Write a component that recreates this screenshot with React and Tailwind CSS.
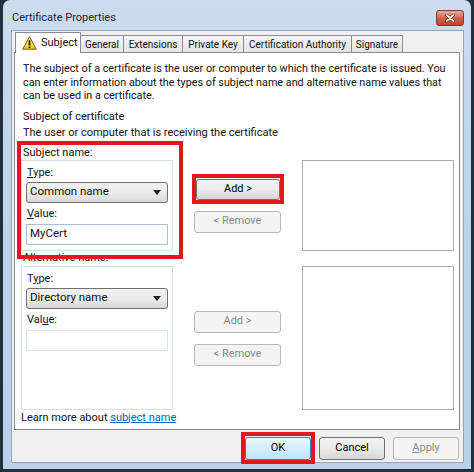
import React from 'react'

const font = { fontFamily: 'Roboto, "Noto Sans", sans-serif' }

function Warn() {
  return (
    <svg width="15" height="14" viewBox="0 0 15 14">
      <defs>
        <linearGradient id="wg" x1="0" y1="0" x2="0" y2="1">
          <stop offset="0" stopColor="#fff6a8" />
          <stop offset="1" stopColor="#e8c21c" />
        </linearGradient>
      </defs>
      <path d="M7.5 0.8 L14.3 13.2 L0.7 13.2 Z" fill="url(#wg)" stroke="#7a5a00" strokeWidth="1" strokeLinejoin="round" />
      <rect x="6.7" y="4.2" width="1.6" height="5.2" fill="#111" />
      <rect x="6.7" y="10.4" width="1.6" height="1.6" fill="#111" />
    </svg>
  )
}

function Btn({ children, disabled, primary, className = '' }) {
  const tone = disabled
    ? 'border-[#b5b9bd] bg-[#f4f4f4] text-[#8a8a8a]'
    : primary
      ? 'border-[#3c7fb1] bg-gradient-to-b from-[#eaf6fd] to-[#bee6fd] text-black'
      : 'border-[#707070] bg-gradient-to-b from-[#f2f2f2] via-[#ebebeb] to-[#d5d5d5] text-black'
  return (
    <div className={`flex items-center justify-center rounded-[3px] border ${tone} ${className}`}>
      {children}
    </div>
  )
}

function Combo({ label }) {
  return (
    <div className="flex h-[21px] items-center justify-between rounded-[3px] border border-[#707070] bg-gradient-to-b from-[#f2f2f2] via-[#ebebeb] to-[#d8d8d8] pl-[3px] pr-[6px] text-[11.5px]">
      <span>{label}</span>
      <svg width="8" height="5" viewBox="0 0 8 5"><path d="M0 0 H8 L4 5 Z" fill="#222" /></svg>
    </div>
  )
}

function Group({ typeLabel, valueLabel, combo, value, light, className = '' }) {
  return (
    <div className={`flex flex-col border border-[#d5dfe5] px-[4px] ${className}`}>
      <div className="mt-[5px] h-[14px] pl-[1px] leading-[14px]">{typeLabel}</div>
      <div className="mt-[2px]"><Combo label={combo} /></div>
      <div className="mt-[4px] h-[14px] pl-[1px] leading-[14px]">{valueLabel}</div>
      <div className={`mt-[3px] flex h-[21px] items-center border bg-white pl-[3px] text-[11.5px] ${light ? 'border-[#dde2e7]' : 'border-[#a9bfd6]'}`}>
        {value}
      </div>
    </div>
  )
}

export default function App() {
  const tabs = [
    { label: 'General', w: 'w-[43px]' },
    { label: 'Extensions', w: 'w-[59px]' },
    { label: 'Private Key', w: 'w-[61px]' },
    { label: 'Certification Authority', w: 'w-[108px]' },
    { label: 'Signature', w: 'w-[51px]' },
  ]

  return (
    <div className="h-[472px] w-[474px] overflow-hidden bg-[#22303c] pb-[3px] pl-[3px] pr-[3px] text-[11px] text-[#111]" style={font}>
      <div className="flex h-full flex-col rounded-t-[7px] bg-gradient-to-b from-[#cbdcee] via-[#bdd3ea] to-[#b9d1ea] pb-[6px] pl-[8px] pr-[7px]">
        {/* Title bar */}
        <div className="flex h-[30px] shrink-0 items-start justify-between">
          <div className="mt-[11px] pl-[1px] text-[11px] leading-[14px] text-[#17283a]">Certificate Properties</div>
          <div className="mt-[10px] flex h-[16px] w-[28px] items-center justify-center rounded-[3px] border border-[#7d3a30] bg-gradient-to-b from-[#e9a99b] via-[#d2634e] to-[#c0402a]">
            <svg width="10" height="8" viewBox="0 0 10 8">
              <path d="M1.5 1 L8.5 7 M8.5 1 L1.5 7" stroke="#5a1a10" strokeWidth="3" strokeLinecap="round" />
              <path d="M1.5 1 L8.5 7 M8.5 1 L1.5 7" stroke="#fff" strokeWidth="1.7" strokeLinecap="round" />
            </svg>
          </div>
        </div>

        {/* Client area */}
        <div className="flex flex-1 flex-col border border-[#8fa5bd] bg-[#f0f0f0]">
          {/* Tabs */}
          <div className="ml-[3px] flex h-[21px] items-end text-[10px]">
            <div className="relative z-10 -mb-px flex h-[21px] w-[66px] items-center gap-[4px] border border-b-0 border-[#898c95] bg-white pl-[6px] text-[11px]">
              <Warn />
              <span>Subject</span>
            </div>
            {tabs.map(t => (
              <div key={t.label} className={`flex h-[17px] items-center justify-center border border-b-0 border-l-0 border-[#898c95] bg-gradient-to-b from-[#f6f6f6] to-[#e4e4e4] ${t.w}`}>
                {t.label}
              </div>
            ))}
          </div>

          {/* Panel */}
          <div className="ml-[2px] flex h-[378px] w-[446px] flex-col border border-[#898c95] bg-white pl-[6px] pr-[5px]">
            <p className="mt-[9px] whitespace-nowrap pl-[2px] text-[10.8px] leading-[13.5px]">
              The subject of a certificate is the user or computer to which the certificate is issued. You<br />
              can enter information about the types of subject name and alternative name values that<br />
              can be used in a certificate.
            </p>
            <div className="mt-[7px] pl-[2px] leading-[14px]">Subject of certificate</div>
            <div className="mt-[2px] pl-[2px] leading-[14px]">The user or computer that is receiving the certificate</div>

            {/* Row 1 */}
            <div className="mt-[6px] grid grid-cols-[152px_87px_152px] gap-x-[21px]">
              <div className="relative flex flex-col">
                <div className="h-[14px] pl-[2px] leading-[14px]">Subject name:</div>
                <Group
                  className="h-[91px]"
                  typeLabel={<><span className="underline">T</span>ype:</>}
                  valueLabel={<><span className="underline">V</span>alue:</>}
                  combo="Common name"
                  value="MyCert"
                />
                <div className="absolute -left-[4px] -top-[5px] bottom-[-8px] right-[-10px] z-20 border-[4px] border-[#e3151f]" />
              </div>
              <div className="flex flex-col pt-[33px]">
                <div className="relative ml-[2px] w-[84px]">
                  <Btn className="h-[21px]">Add &gt;</Btn>
                  <div className="absolute -bottom-[4px] -left-[4px] -right-[4px] -top-[5px] border-[4px] border-[#e3151f]" />
                </div>
                <Btn disabled className="mt-[11px] h-[22px]">&lt; Remove</Btn>
              </div>
              <div className="mt-[14px] h-[91px] border border-[#a9adb3] bg-white" />
            </div>

            {/* Row 2 */}
            <div className="h-[14px] pl-[2px] leading-[14px]">Alternative name:</div>
            <div className="mt-[1px] grid grid-cols-[152px_87px_152px] gap-x-[21px]">
              <Group
                className="h-[144px]"
                typeLabel={<>T<span className="underline">y</span>pe:</>}
                valueLabel={<>Val<span className="underline">u</span>e:</>}
                combo="Directory name"
                value=""
                light
              />
              <div className="flex flex-col pt-[45px]">
                <Btn disabled className="h-[22px]">Add &gt;</Btn>
                <Btn disabled className="mt-[11px] h-[22px]">&lt; Remove</Btn>
              </div>
              <div className="h-[144px] border border-[#a9adb3] bg-white" />
            </div>

            <div className="mt-[1px] h-[14px] leading-[14px]">
              Learn more about <span className="text-[#0066cc] underline">subject name</span>
            </div>
          </div>

          {/* Dialog buttons */}
          <div className="mt-[7px] flex justify-end gap-[8px] pr-[4px]">
            <div className="relative">
              <Btn primary className="h-[23px] w-[66px]">OK</Btn>
              <div className="absolute -bottom-[4px] -left-[4px] -right-[4px] -top-[5px] border-[4px] border-[#e3151f]" />
            </div>
            <Btn className="h-[23px] w-[66px]">Cancel</Btn>
            <Btn disabled className="h-[23px] w-[66px]"><span className="underline">A</span>pply</Btn>
          </div>
        </div>
      </div>
    </div>
  )
}
